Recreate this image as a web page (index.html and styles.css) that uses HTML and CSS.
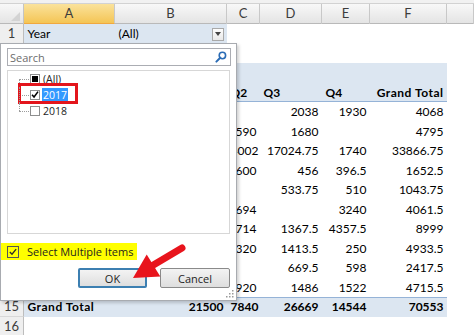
FILE: index.html
```html
<!DOCTYPE html>
<html lang="en">
<head>
    <meta charset="UTF-8">
    <meta name="viewport" content="width=device-width, initial-scale=1.0">
    <title>Pivot Table - Year Filter</title>
    <link rel="stylesheet" href="styles.css">
</head>
<body>
    <div class="sheet">
        <div class="top-strip"></div>
        <div class="row head-row">
            <div class="corner"></div>
            <div class="col-h active">A</div>
            <div class="col-h">B</div>
            <div class="col-h">C</div>
            <div class="col-h">D</div>
            <div class="col-h">E</div>
            <div class="col-h">F</div>
            <div class="col-h"></div>
        </div>
        <div class="row">
            <div class="rh">1</div>
            <div class="cell band">Year</div>
            <div class="cell band filter-cell">(All)<span class="filter-btn"></span></div>
            <div class="cell"></div><div class="cell"></div><div class="cell"></div><div class="cell"></div><div class="cell"></div>
        </div>
        <!-- rows 2-14: row numbers sit under the filter dropdown -->
        <div class="row">
            <div class="rh"></div>
            <div class="cell"></div><div class="cell"></div><div class="cell"></div><div class="cell"></div><div class="cell"></div><div class="cell"></div><div class="cell"></div>
        </div>
        <div class="row">
            <div class="rh"></div>
            <div class="cell band"></div><div class="cell band"></div>
            <div class="cell band"></div><div class="cell band"></div><div class="cell band"></div><div class="cell band"></div>
            <div class="cell"></div>
        </div>
        <div class="row">
            <div class="rh"></div>
            <div class="cell band line-b"></div>
            <div class="cell band line-b"></div>
            <div class="cell band line-b bold">Q2</div>
            <div class="cell band line-b bold">Q3</div>
            <div class="cell band line-b bold">Q4</div>
            <div class="cell band line-b bold num wide">Grand Total</div>
            <div class="cell"></div>
        </div>
        <div class="row">
            <div class="rh"></div>
            <div class="cell"></div><div class="cell num"></div><div class="cell num"></div>
            <div class="cell num">2038</div><div class="cell num">1930</div><div class="cell num">4068</div><div class="cell"></div>
        </div>
        <div class="row">
            <div class="rh"></div>
            <div class="cell"></div><div class="cell num"></div><div class="cell num">590</div>
            <div class="cell num">1680</div><div class="cell num"></div><div class="cell num">4795</div><div class="cell"></div>
        </div>
        <div class="row">
            <div class="rh"></div>
            <div class="cell"></div><div class="cell num"></div><div class="cell num">4002</div>
            <div class="cell num">17024.75</div><div class="cell num">1740</div><div class="cell num">33866.75</div><div class="cell"></div>
        </div>
        <div class="row">
            <div class="rh"></div>
            <div class="cell"></div><div class="cell num"></div><div class="cell num">600</div>
            <div class="cell num">456</div><div class="cell num">396.5</div><div class="cell num">1652.5</div><div class="cell"></div>
        </div>
        <div class="row">
            <div class="rh"></div>
            <div class="cell"></div><div class="cell num"></div><div class="cell num"></div>
            <div class="cell num">533.75</div><div class="cell num">510</div><div class="cell num">1043.75</div><div class="cell"></div>
        </div>
        <div class="row">
            <div class="rh"></div>
            <div class="cell"></div><div class="cell num"></div><div class="cell num">694</div>
            <div class="cell num"></div><div class="cell num">3240</div><div class="cell num">4061.5</div><div class="cell"></div>
        </div>
        <div class="row">
            <div class="rh"></div>
            <div class="cell"></div><div class="cell num"></div><div class="cell num">714</div>
            <div class="cell num">1367.5</div><div class="cell num">4357.5</div><div class="cell num">8999</div><div class="cell"></div>
        </div>
        <div class="row">
            <div class="rh"></div>
            <div class="cell"></div><div class="cell num"></div><div class="cell num">320</div>
            <div class="cell num">1413.5</div><div class="cell num">250</div><div class="cell num">4933.5</div><div class="cell"></div>
        </div>
        <div class="row">
            <div class="rh"></div>
            <div class="cell"></div><div class="cell num"></div><div class="cell num"></div>
            <div class="cell num">669.5</div><div class="cell num">598</div><div class="cell num">2417.5</div><div class="cell"></div>
        </div>
        <div class="row">
            <div class="rh"></div>
            <div class="cell"></div><div class="cell num"></div><div class="cell num">920</div>
            <div class="cell num">1486</div><div class="cell num">1522</div><div class="cell num">4715.5</div><div class="cell"></div>
        </div>
        <div class="row">
            <div class="rh">15</div>
            <div class="cell band line-t bold wide">Grand Total</div>
            <div class="cell band line-t bold num">21500</div>
            <div class="cell band line-t bold num">7840</div>
            <div class="cell band line-t bold num">26669</div>
            <div class="cell band line-t bold num">14544</div>
            <div class="cell band line-t bold num">70553</div>
            <div class="cell"></div>
        </div>
        <div class="row">
            <div class="rh">16</div>
            <div class="cell"></div><div class="cell"></div><div class="cell"></div><div class="cell"></div><div class="cell"></div><div class="cell"></div><div class="cell"></div>
        </div>

        <div class="filter-menu">
            <div class="search">
                <span>Search</span>
                <svg width="12" height="12" viewBox="0 0 12 12">
                    <circle cx="7.4" cy="4.5" r="3.2" fill="none" stroke="#2b6cb5" stroke-width="1.6"/>
                    <line x1="5.2" y1="6.8" x2="1.4" y2="10.6" stroke="#2b6cb5" stroke-width="2" stroke-linecap="round"/>
                </svg>
            </div>
            <div class="item-list">
                <div class="item">
                    <span class="cb"><span class="fill"></span></span>
                    <span class="label">(All)</span>
                </div>
                <div class="item marked">
                    <span class="cb">
                        <svg width="10" height="10" viewBox="0 0 10 10"><path d="M1.3 4.6 L3.8 7.4 L8.8 0.8" fill="none" stroke="#000" stroke-width="2"/></svg>
                    </span>
                    <span class="label selected">2017</span>
                    <span class="mark"></span>
                </div>
                <div class="item last">
                    <span class="cb"></span>
                    <span class="label">2018</span>
                </div>
            </div>
            <div class="multi">
                <span class="cb big">
                    <svg width="12" height="12" viewBox="0 0 12 12"><path d="M2.2 6 L4.8 8.6 L9.8 2.6" fill="none" stroke="#2a2a2a" stroke-width="1.6"/></svg>
                </span>
                <span>Select Multiple Items</span>
            </div>
            <div class="buttons">
                <button class="btn focus">OK</button>
                <button class="btn">Cancel</button>
            </div>
            <svg class="grip" width="8" height="8" viewBox="0 0 8 8">
                <rect x="6" y="0" width="1.5" height="1.5" fill="#9a9a9a"/>
                <rect x="3" y="3" width="1.5" height="1.5" fill="#9a9a9a"/>
                <rect x="6" y="3" width="1.5" height="1.5" fill="#9a9a9a"/>
                <rect x="0" y="6" width="1.5" height="1.5" fill="#9a9a9a"/>
                <rect x="3" y="6" width="1.5" height="1.5" fill="#9a9a9a"/>
                <rect x="6" y="6" width="1.5" height="1.5" fill="#9a9a9a"/>
            </svg>
        </div>

        <svg class="arrow" width="474" height="335" viewBox="0 0 474 335">
            <line x1="182" y1="248" x2="150" y2="267" stroke="#e8141c" stroke-width="7" stroke-linecap="round"/>
            <polygon points="133,278 146.7,254.4 160.3,276.6" fill="#e8141c"/>
        </svg>
    </div>
</body>
</html>
```

FILE: styles.css
```css
* {
    margin: 0;
    padding: 0;
    box-sizing: border-box;
}
body {
    font-family: Lato, 'Liberation Sans', sans-serif;
    font-size: 12px;
    color: #000;
    background: #fff;
    width: 474px;
    height: 335px;
    overflow: hidden;
}
.sheet {
    position: relative;
}
.top-strip {
    height: 3px;
    background: #f1f1f1;
}
.row {
    display: grid;
    grid-template-columns: 24px 91px 112px 33px 62px 48px 77px 1fr;
    height: 19.5px;
}
.head-row {
    height: 21px;
    background: linear-gradient(#f8f8f8, #e4e4e4);
    border-top: 1px solid #d2d2d2;
    border-bottom: 1px solid #b9b9b9;
}
.corner {
    position: relative;
    border-right: 1px solid #c4c4c4;
}
.corner::after {
    content: "";
    position: absolute;
    right: 3px;
    bottom: 3px;
    border-left: 9px solid transparent;
    border-bottom: 9px solid #d3d3d3;
}
.col-h {
    border-right: 1px solid #c8c8c8;
    text-align: center;
    line-height: 19px;
    font-size: 13px;
    color: #3c3c3c;
}
.col-h.active {
    background: linear-gradient(#fae29b, #f4c555);
    border-bottom: 1px solid #f0a840;
}
.rh {
    background: #efefef;
    border-right: 1px solid #bdbdbd;
    border-bottom: 1px solid #d8d8d8;
    text-align: center;
    line-height: 19px;
    font-size: 13px;
    color: #3c3c3c;
}
.cell {
    padding: 0 3.5px 0 3.5px;
    line-height: 19.5px;
    white-space: nowrap;
    overflow: hidden;
}
.num {
    text-align: right;
}
.bold {
    font-weight: bold;
}
.wide {
    letter-spacing: 0.5px;
}
.band {
    background: #dce6f1;
}
.line-b {
    box-shadow: inset 0 -1px #95b3d7;
}
.line-t {
    box-shadow: inset 0 1px #95b3d7;
}
.filter-cell {
    display: flex;
    align-items: center;
    justify-content: space-between;
    padding-right: 3px;
}
.filter-btn {
    width: 12px;
    height: 13px;
    border: 1px solid #a9a9a9;
    background: linear-gradient(#fdfdfd, #e9e9e9);
    display: flex;
    align-items: center;
    justify-content: center;
}
.filter-btn::before {
    content: "";
    border-left: 3.5px solid transparent;
    border-right: 3.5px solid transparent;
    border-top: 4px solid #444;
}

/* filter dropdown */
.filter-menu {
    position: absolute;
    left: 0;
    top: 43px;
    width: 237px;
    height: 258px;
    background: #fff;
    border: 1px solid #a8abb0;
    box-shadow: 2px 2px 3px rgba(0, 0, 0, 0.18);
    padding: 4px 5px 0 6px;
    display: flex;
    flex-direction: column;
    font-family: 'Open Sans', sans-serif;
    font-size: 10.5px;
    color: #1e1e1e;
}
.search {
    height: 18px;
    border: 1px solid #abadb3;
    display: flex;
    align-items: center;
    justify-content: space-between;
    padding: 0 3px 0 2px;
    color: #6d6d6d;
    font-size: 11px;
}
.item-list {
    margin-top: 4px;
    margin-right: 1px;
    height: 164px;
    border: 1px solid #d7d7d7;
}
.item {
    position: relative;
    display: flex;
    align-items: center;
    height: 16px;
    padding-left: 22px;
}
.item::before {
    content: "";
    position: absolute;
    left: 11px;
    top: 50%;
    width: 10px;
    border-top: 1px dotted #9c9c9c;
}
.item::after {
    content: "";
    position: absolute;
    left: 11px;
    top: 0;
    height: 100%;
    border-left: 1px dotted #9c9c9c;
}
.item:first-child::after {
    top: 50%;
    height: 50%;
}
.item.last::after {
    height: 50%;
}
.cb {
    width: 10px;
    height: 10px;
    border: 1px solid #8e8f8f;
    background: #fff;
    display: flex;
    align-items: center;
    justify-content: center;
    margin-right: 2px;
    flex: none;
}
.cb .fill {
    width: 6px;
    height: 6px;
    background: #000;
}
.label {
    padding: 0 1px;
    line-height: 15px;
}
.label.selected {
    background: #3399ff;
    color: #fff;
}
.mark {
    position: absolute;
    left: 10px;
    top: -4px;
    width: 60px;
    height: 21px;
    border: 3px solid #e3151c;
}
.multi {
    margin: 9px 0 0 -6px;
    width: 136px;
    height: 17px;
    background: #ffff00;
    display: flex;
    align-items: center;
    padding-left: 6px;
    gap: 8px;
    font-size: 11px;
}
.cb.big {
    width: 12px;
    height: 12px;
    border-color: #555;
    background: transparent;
    margin-right: 0;
}
.buttons {
    margin-top: 8px;
    display: flex;
    justify-content: flex-end;
    gap: 13px;
    padding-right: 1px;
}
.btn {
    width: 69px;
    height: 20px;
    border: 1px solid #8a8a8a;
    border-radius: 2px;
    background: linear-gradient(#f3f3f3, #dedede);
    font-family: 'Open Sans', sans-serif;
    font-size: 11px;
    color: #1e1e1e;
}
.btn + .btn {
    width: 70px;
}
.btn.focus {
    border: 2px solid #3c7fb1;
}
.grip {
    position: absolute;
    right: 2px;
    bottom: 2px;
}
.arrow {
    position: absolute;
    left: 0;
    top: 0;
    pointer-events: none;
}
```
